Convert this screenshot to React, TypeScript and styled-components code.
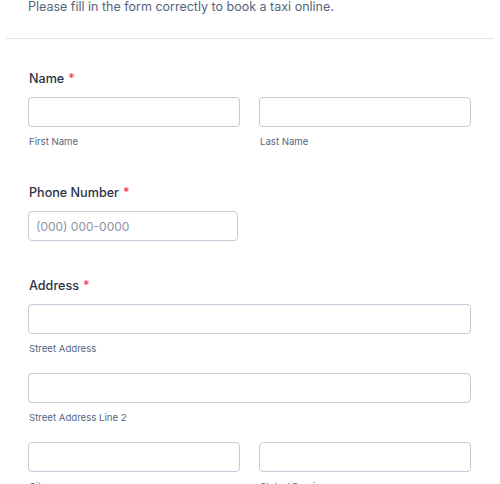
import React from 'react';
import styled, { createGlobalStyle } from 'styled-components';

const GlobalStyle = createGlobalStyle`
  body {
    margin: 0;
    background: #ffffff;
    font-family: Inter, "Noto Sans", Arial, sans-serif;
    -webkit-font-smoothing: antialiased;
  }
`;

const Page = styled.div`
  width: 500px;
  height: 484px;
  overflow: hidden;
`;

const Header = styled.div`
  margin: 0 6px;
  padding: 0 22px;
  height: 38px;
  border-bottom: 1px solid #e3e5ec;
`;

const Description = styled.p`
  margin: 0;
  font-size: 12.5px;
  line-height: 14px;
  color: #57647e;
`;

const FormBody = styled.div`
  padding: 30px 29px 0 28px;
`;

const Field = styled.div`
  margin-bottom: 35px;
`;

const Label = styled.div`
  padding-left: 1px;
  font-size: 12.6px;
  font-weight: 500;
  line-height: 20px;
  color: #2c3345;
  margin-bottom: 8px;
`;

const Required = styled.span`
  color: #f23a3c;
  margin-left: 4px;
`;

const Row = styled.div<{ $cols?: number }>`
  display: grid;
  grid-template-columns: ${(p) => (p.$cols === 2 ? '1fr 1fr' : '1fr')};
  column-gap: 19px;
  & + & {
    margin-top: 18px;
  }
`;

const Cell = styled.div``;

const Input = styled.input<{ $width?: number }>`
  box-sizing: border-box;
  display: block;
  width: ${(p) => (p.$width ? `${p.$width}px` : '100%')};
  height: 30px;
  padding: 0 7px;
  border: 1px solid #c3cad8;
  border-radius: 4px;
  background: #ffffff;
  font-family: inherit;
  font-size: 12px;
  color: #2c3345;
  outline: none;
  &::placeholder {
    color: #8d93a6;
  }
`;

const SubLabel = styled.div`
  margin-top: 9px;
  padding-left: 1px;
  font-size: 9.6px;
  line-height: 12px;
  color: #57647e;
`;

export default function App() {
  return (
    <Page>
      <GlobalStyle />
      <Header>
        <Description>Please fill in the form correctly to book a taxi online.</Description>
      </Header>
      <FormBody>
        <Field>
          <Label>
            Name<Required>*</Required>
          </Label>
          <Row $cols={2}>
            <Cell>
              <Input type="text" />
              <SubLabel>First Name</SubLabel>
            </Cell>
            <Cell>
              <Input type="text" />
              <SubLabel>Last Name</SubLabel>
            </Cell>
          </Row>
        </Field>
        <Field>
          <Label>
            Phone Number<Required>*</Required>
          </Label>
          <Input type="tel" $width={210} placeholder="(000) 000-0000" />
        </Field>
        <Field>
          <Label>
            Address<Required>*</Required>
          </Label>
          <Row>
            <Cell>
              <Input type="text" />
              <SubLabel>Street Address</SubLabel>
            </Cell>
          </Row>
          <Row>
            <Cell>
              <Input type="text" />
              <SubLabel>Street Address Line 2</SubLabel>
            </Cell>
          </Row>
          <Row $cols={2}>
            <Cell>
              <Input type="text" />
              <SubLabel>City</SubLabel>
            </Cell>
            <Cell>
              <Input type="text" />
              <SubLabel>State / Province</SubLabel>
            </Cell>
          </Row>
        </Field>
      </FormBody>
    </Page>
  );
}
